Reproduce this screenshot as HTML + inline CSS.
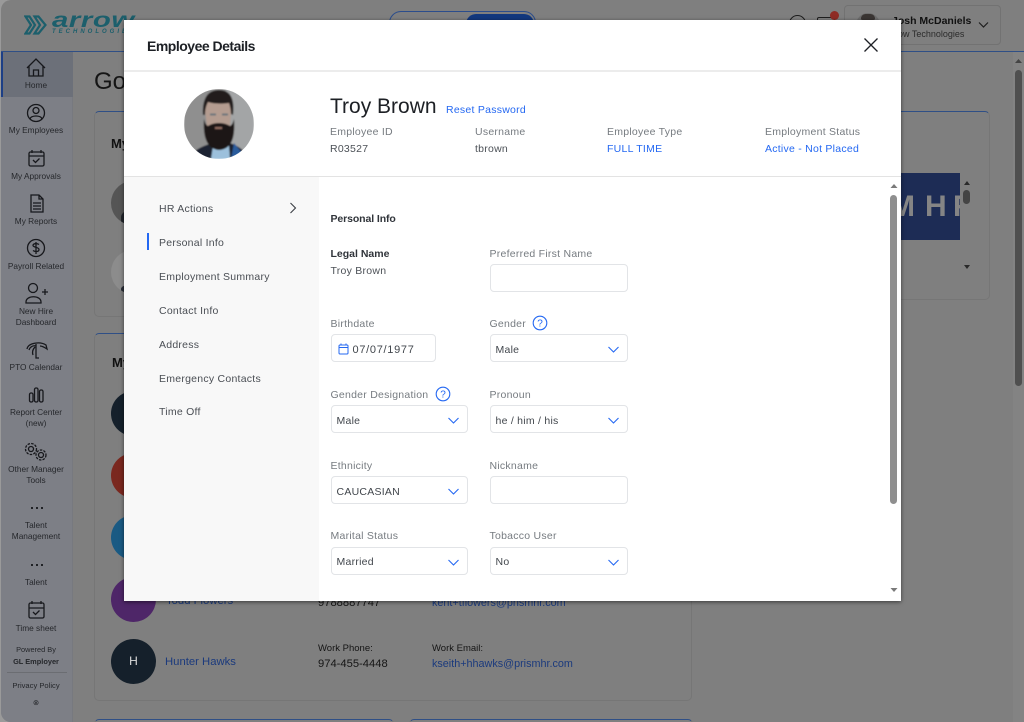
<!DOCTYPE html>
<html><head><meta charset="utf-8"><title>Employee Details</title>
<style>
*{box-sizing:border-box}
html,body{margin:0;padding:0;width:1024px;height:722px;overflow:hidden;background:#9a9a9a;font-family:"Liberation Sans",sans-serif}
.a{position:absolute;white-space:nowrap}
#page{position:absolute;left:1px;top:0;width:1023px;height:722px;background:#7f7f7f;border-radius:10px 0 0 10px;overflow:hidden}
#side{position:absolute;left:0;top:52px;width:72px;height:670px;background:#7d7f86;border-right:1px solid #77797f}
.nl{position:absolute;left:0;width:70px;text-align:center;font-size:8.3px;line-height:11px;color:#25272b}
.card{position:absolute;border:1px solid #767676;border-radius:5px;background:#7f7f7f}
.card.t{border-top:1px solid #2f4f86}
.av{position:absolute;border-radius:50%;overflow:hidden}
.blue{color:#1b3a7d}
#m{position:absolute;left:124px;top:20px;width:777px;height:581px;background:#fff;box-shadow:0 1px 4px rgba(0,0,0,.55);overflow:hidden}
.lb{position:absolute;font-size:10.5px;letter-spacing:.25px;color:#767b80;white-space:nowrap;line-height:13px}
.val{position:absolute;font-size:10.5px;letter-spacing:.25px;color:#4c5157;white-space:nowrap;line-height:13px}
.link{color:#2468f2}
.ni{position:absolute;left:35px;font-size:10.5px;letter-spacing:.25px;color:#4a4e54;white-space:nowrap;line-height:13px}
.in{position:absolute;border:1px solid #e2e4e7;border-radius:4px;background:#fff;height:28px;font-size:10.5px;letter-spacing:.25px;color:#41464c;line-height:30px;padding-left:5px;white-space:nowrap}
.in svg{position:absolute;right:8px;top:11px}
.L{left:206.5px;width:137.5px}
.R{left:365.5px;width:138.5px}
</style></head><body>
<div id="page">
<!-- header -->
<svg class="a" style="left:23px;top:15px" width="24" height="20" viewBox="0 0 24 20" fill="none" stroke="#1c5f6c" stroke-width="2.2"><path d="M1.500 1.500h4l5.500 8.500-5.500 8.500h-4l5.500-8.500z"/><path d="M10.500 1.500h4l7 8.500-7 8.500h-4l5.500-8.500z"/></svg>
<div class="a" style="left:51px;top:9px;font:italic bold 21px/24px 'Liberation Sans',sans-serif;color:#1c5f6c;transform:scaleX(1.4);transform-origin:0 0;letter-spacing:.4px">arrow</div>
<div class="a" style="left:51px;top:28px;font:italic bold 6px/8px 'Liberation Sans',sans-serif;color:#1c5f6c;letter-spacing:3px">TECHNOLOGIES</div>
<div class="a" style="left:388px;top:11px;width:147px;height:24px;border:1px solid #2b4d8c;border-radius:12px"></div>
<div class="a" style="left:465px;top:14px;width:68px;height:20px;background:#12387e;border-radius:10px"></div>
<div class="a" style="left:0;top:51px;width:1023px;height:1px;background:#2f4f86"></div>
<div class="a" style="left:788px;top:15px;width:17px;height:17px;border:1.3px solid #1e1e1e;border-radius:50%"></div>
<div class="a" style="left:816px;top:17px;width:18px;height:16px;border:1.3px solid #1e1e1e;border-radius:2px"></div>
<div class="a" style="left:829px;top:11px;width:9px;height:9px;background:#8e2b25;border-radius:50%"></div>
<div class="a" style="left:843px;top:5px;width:157px;height:40px;border:1px solid #727272;border-radius:4px"></div>
<div class="a" style="left:855px;top:13px;width:24px;height:24px;border-radius:50%;background:#6d6d6d;overflow:hidden"><div class="a" style="left:5px;top:1px;width:14px;height:6px;background:#3a3533;border-radius:6px 6px 2px 2px"></div></div>
<div class="a" style="left:891px;top:14px;font-size:10.5px;font-weight:bold;line-height:14px;color:#111">Josh McDaniels</div>
<div class="a" style="left:885px;top:29px;font-size:9px;line-height:11px;color:#2b2b2b">Arrow Technologies</div>
<svg class="a" style="left:977px;top:21px" width="11" height="8" viewBox="0 0 11 8" fill="none" stroke="#1e1e1e" stroke-width="1.200"><path d="M1 1.500l4.500 4.500L10 1.500"/></svg>
<!-- sidebar -->
<div id="side">
<div class="a" style="left:0;top:0;width:72px;height:45px;background:#6c7079"></div>
<div class="a" style="left:0;top:0;width:2px;height:45px;background:#1d3f86"></div>
<div class="nl" style="top:28px">Home</div>
<div class="nl" style="top:73px">My Employees</div>
<div class="nl" style="top:119px">My Approvals</div>
<div class="nl" style="top:164px">My Reports</div>
<div class="nl" style="top:209px">Payroll Related</div>
<div class="nl" style="top:254px">New Hire<br>Dashboard</div>
<div class="nl" style="top:310px">PTO Calendar</div>
<div class="nl" style="top:355px">Report Center<br>(new)</div>
<div class="nl" style="top:412px">Other Manager<br>Tools</div>
<div class="nl" style="top:468px">Talent<br>Management</div>
<div class="nl" style="top:525px">Talent</div>
<div class="nl" style="top:571px">Time sheet</div>
<div class="nl" style="top:592px;font-size:7.4px">Powered By</div>
<div class="nl" style="top:604px;font-size:7.4px;font-weight:bold">GL Employer</div>
<div class="a" style="left:6px;top:620px;width:60px;height:1px;background:#6b6d72"></div>
<div class="nl" style="top:628px;font-size:7.600px">Privacy Policy</div>
<div class="nl" style="top:645px;font-size:7.600px">&#8855;</div>
</div>
<svg class="a" style="left:0;top:52px" width="72" height="600" viewBox="0 0 72 600" fill="none" stroke="#17181c" stroke-width="1.300">
<path d="M26 16l9-9 9 9M28 14v10h14V14M32.500 24v-6h5v6"/>
<circle cx="35" cy="61" r="8.500"/><circle cx="35" cy="58.500" r="3"/><path d="M29 67c1-4 11-4 12 0"/>
<rect x="28" y="100" width="15" height="14" rx="1.500"/><path d="M28 104h15M31 98v3M40 98v3M32 108l2.500 2.500 4-4"/>
<path d="M30 143h8l4 4v13H30zM38 143v4h4M32 151h8M32 154h8M32 157h8"/>
<circle cx="35" cy="196" r="8.500"/><path d="M38 192.500c-2-1.500-6-1-6 1s6 1.500 6 4-4 2.500-6 1M35 190v12"/>
<circle cx="32" cy="236" r="4.500"/><path d="M25 250c0-7 15-7 15 0v1H25zM41 240h6M44 237v6"/>
<path d="M35 292v14h3M26 297c1-6 13-8 19-4l1 4c-3-2-5-3-7-3M28 298c1-3 4-5 7-4M32 303c-1-3 0-6 2-8"/>
<rect x="28.500" y="341" width="3.500" height="9" rx="1.500"/><rect x="33.500" y="336" width="3.500" height="14" rx="1.500"/><rect x="38.500" y="338" width="3.500" height="12" rx="1.500"/>
<circle cx="30" cy="397" r="2.500"/><circle cx="30" cy="397" r="5.500" stroke-dasharray="2.500 1.200"/><circle cx="40" cy="403" r="2.500"/><circle cx="40" cy="403" r="5" stroke-dasharray="2.500 1.200"/>
<rect x="28" y="551" width="15" height="15" rx="1.500"/><path d="M28 556h15M31 549v3M40 549v3M32 560l2.500 2.500 4-4"/>
</svg>
<div class="a" style="left:30px;top:507px;width:2px;height:2px;background:#202226;box-shadow:5px 0 #202226,10px 0 #202226"></div>
<div class="a" style="left:30px;top:564px;width:2px;height:2px;background:#202226;box-shadow:5px 0 #202226,10px 0 #202226"></div>
<!-- main -->
<div class="a" style="left:93px;top:69px;font-size:24px;line-height:26px;color:#151515">Good</div>
<div class="card t" style="left:93px;top:111px;width:600px;height:206px"></div>
<div class="a" style="left:110px;top:136px;font-size:13px;font-weight:bold;line-height:15px;color:#111">My</div>
<div class="av" style="left:110px;top:181px;width:44px;height:44px;background:#555"><div class="a" style="left:10px;top:28px;width:34px;height:20px;background:#22262c;border-radius:40% 0 0 0"></div></div>
<div class="av" style="left:110px;top:250px;width:44px;height:44px;background:#8c8c8c"><div class="a" style="left:10px;top:34px;width:34px;height:12px;background:#2a2f38;border-radius:40% 0 0 0"></div></div>
<div class="card t" style="left:93px;top:333px;width:598px;height:368px"></div>
<div class="a" style="left:111px;top:355px;font-size:13px;font-weight:bold;line-height:15px;color:#111">My</div>
<div class="av" style="left:110px;top:391px;width:45px;height:45px;background:#15202b"></div>
<div class="av" style="left:110px;top:453px;width:45px;height:45px;background:#7a281f"></div>
<div class="av" style="left:110px;top:515px;width:45px;height:45px;background:#1a5a83"></div>
<div class="av" style="left:110px;top:577px;width:45px;height:45px;background:#4e2668"></div>
<div class="av" style="left:110px;top:639px;width:45px;height:45px;background:#15202b;color:#ddd;font-size:12px;line-height:45px;text-align:center">H</div>
<div class="a blue" style="left:165px;top:595px;font-size:11.3px;line-height:13px">Todd Flowers</div>
<div class="a" style="left:317px;top:597px;font-size:11.2px;line-height:13px;color:#151515">9788887747</div>
<div class="a blue" style="left:431px;top:597px;font-size:10.800px;line-height:13px">kent+tflowers@prismhr.com</div>
<div class="a blue" style="left:164px;top:656px;font-size:11.3px;line-height:13px">Hunter Hawks</div>
<div class="a" style="left:317px;top:643px;font-size:9.500px;line-height:12px;color:#151515">Work Phone:</div>
<div class="a" style="left:317px;top:658px;font-size:11.2px;line-height:13px;color:#151515">974-455-4448</div>
<div class="a" style="left:431px;top:643px;font-size:9.500px;line-height:12px;color:#151515">Work Email:</div>
<div class="a blue" style="left:431px;top:658px;font-size:10.800px;line-height:13px">kseith+hhawks@prismhr.com</div>
<div class="card t" style="left:93px;top:719px;width:300px;height:20px"></div>
<div class="card t" style="left:408px;top:719px;width:284px;height:20px"></div>
<div class="card t" style="left:800px;top:111px;width:189px;height:189px"></div>
<div class="a" style="left:899px;top:173px;width:60px;height:67px;background:#1d2c55;overflow:hidden;color:#858585;font-size:30px;font-weight:bold;line-height:67px">
<span class="a" style="left:-10px;top:0">M</span><span class="a" style="left:25px;top:0">H</span><span class="a" style="left:53px;top:0">R</span></div>
<svg class="a" style="left:961px;top:180px" width="10" height="95" fill="#2a2a2a"><path d="M2 5l3-4 3 4zM2 85l3 4 3-4z"/></svg>
<div class="a" style="left:962px;top:190px;width:7px;height:14px;background:#444;border-radius:4px"></div>
<!-- page scrollbar -->
<div class="a" style="left:1012px;top:52px;width:11px;height:670px;background:#838383"></div>
<div class="a" style="left:1014px;top:70px;width:7px;height:316px;background:#4f4f4f;border-radius:4px"></div>
<svg class="a" style="left:1013px;top:58px" width="9" height="6" fill="#444"><path d="M1 5l3.500-4 3.500 4z"/></svg>
<div class="a" style="left:1005px;top:52px;width:7px;height:670px;background:#7f7f7f"></div>
</div>
<!-- modal -->
<div id="m">
<div class="a" style="left:23px;top:18px;font-size:14px;font-weight:bold;line-height:17px;color:#1d2025;letter-spacing:-.5px">Employee Details</div>
<svg class="a" style="left:739px;top:17px" width="16" height="16" viewBox="0 0 16 16" fill="none" stroke="#1d2025" stroke-width="1.300"><path d="M1.500 1.500l13 13M14.500 1.500l-13 13"/></svg>
<div class="a" style="left:0;top:50px;width:777px;height:2px;background:#ececec"></div>
<svg class="a" style="left:60px;top:69px" width="70" height="70" viewBox="0 0 70 70">
<defs><clipPath id="c"><circle cx="35" cy="35" r="35"/></clipPath><filter id="b"><feGaussianBlur stdDeviation=".7"/></filter></defs>
<g clip-path="url(#c)"><g filter="url(#b)">
<rect width="70" height="70" fill="#8f8f8f"/><rect x="42" width="28" height="70" fill="#a3a5a6"/>
<path d="M6 70c3-10 14-13 22-16h18c8 3 15 7 19 16z" fill="#1c2230"/>
<path d="M50 54l13 16H47z" fill="#2b5c9c"/>
<path d="M27 70l2-13h16l1 13z" fill="#9cc0dc"/>
<path d="M21 22c0-10 6-13 15-13s12 4 11 13l-1 16c-1 6-5 8-11 8s-11-3-12-8z" fill="#b49c90"/>
<path d="M19 26c-1-17 5-25 16-25 11 0 16 8 14 25l-2-1c0-4-1-8-2-11-7 1-15 1-21-1-2 4-3 8-3 13z" fill="#211c1b"/>
<path d="M20 30c1 4 2 6 4 7 3-2 7-3 11-3s8 1 11 3c2-1 3-3 4-7 1 14 0 30-15 31-14-1-16-17-15-31z" fill="#1f1816"/>
<path d="M26 24.500h6v2h-6zM38 24.500h6v2h-6z" fill="#6a747c"/>
<path d="M31 38h7v2h-7z" fill="#8f6a5e"/>
</g></g></svg>
<div class="a" style="left:206px;top:74px;font-size:21px;line-height:25px;color:#1d2025">Troy Brown</div>
<div class="a link" style="left:322px;top:84px;font-size:10.5px;letter-spacing:.25px;line-height:13px">Reset Password</div>
<div class="lb" style="left:206px;top:106px">Employee ID</div>
<div class="val" style="left:206px;top:123px">R03527</div>
<div class="lb" style="left:351px;top:106px">Username</div>
<div class="val" style="left:351px;top:123px">tbrown</div>
<div class="lb" style="left:483px;top:106px">Employee Type</div>
<div class="val link" style="left:483px;top:123px">FULL TIME</div>
<div class="lb" style="left:641px;top:106px">Employment Status</div>
<div class="val link" style="left:641px;top:123px">Active - Not Placed</div>
<div class="a" style="left:0;top:156px;width:777px;height:1px;background:#e3e3e3"></div>
<!-- left nav -->
<div class="a" style="left:0;top:157px;width:195px;height:424px;background:#f8f8f8"></div>
<div class="ni" style="top:183px">HR Actions</div>
<svg class="a" style="left:165px;top:182px" width="8" height="12" viewBox="0 0 8 12" fill="none" stroke="#3a3e44" stroke-width="1.100"><path d="M1.500 1l5 5-5 5"/></svg>
<div class="a" style="left:23px;top:213px;width:2px;height:17px;background:#2468f2"></div>
<div class="ni" style="top:217px">Personal Info</div>
<div class="ni" style="top:251px">Employment Summary</div>
<div class="ni" style="top:285px">Contact Info</div>
<div class="ni" style="top:319px">Address</div>
<div class="ni" style="top:353px">Emergency Contacts</div>
<div class="ni" style="top:386px">Time Off</div>
<!-- form -->
<div class="a" style="left:206.500px;top:193px;font-size:10.500px;font-weight:bold;letter-spacing:-.1px;line-height:13px;color:#30343a">Personal Info</div>
<div class="a" style="left:206.500px;top:228px;font-size:10.500px;font-weight:bold;line-height:13px;color:#30343a">Legal Name</div>
<div class="val" style="left:206.500px;top:245px">Troy Brown</div>
<div class="lb" style="left:365.500px;top:228px">Preferred First Name</div>
<div class="in R" style="top:244px"></div>
<div class="lb" style="left:206.500px;top:298px">Birthdate</div>
<div class="in" style="left:206.500px;top:314px;width:105.500px;padding-left:21px;font-size:11px;letter-spacing:.7px"><svg style="left:6px;top:8px;right:auto" width="11" height="12" viewBox="0 0 11 12" fill="none" stroke="#2468f2" stroke-width="1"><rect x="1" y="2" width="9" height="9" rx="1"/><path d="M1 4.500h9M3 .5v2M8 .5v2"/></svg>07/07/1977</div>
<div class="lb" style="left:365.500px;top:298px">Gender</div>
<svg class="a" style="left:408px;top:295px" width="16" height="16" viewBox="0 0 16 16"><circle cx="8" cy="8" r="6.800" fill="none" stroke="#2468f2" stroke-width="1.100"/><text x="8" y="11.500" text-anchor="middle" font-size="10" fill="#2468f2" font-family="Liberation Sans">?</text></svg>
<div class="in R" style="top:314px">Male<svg width="11" height="7" viewBox="0 0 11 7" fill="none" stroke="#2468f2" stroke-width="1.100"><path d="M.5 1l5 5 5-5"/></svg></div>
<div class="lb" style="left:206.500px;top:369px">Gender Designation</div>
<svg class="a" style="left:311px;top:366px" width="16" height="16" viewBox="0 0 16 16"><circle cx="8" cy="8" r="6.800" fill="none" stroke="#2468f2" stroke-width="1.100"/><text x="8" y="11.500" text-anchor="middle" font-size="10" fill="#2468f2" font-family="Liberation Sans">?</text></svg>
<div class="in L" style="top:385px">Male<svg width="11" height="7" viewBox="0 0 11 7" fill="none" stroke="#2468f2" stroke-width="1.100"><path d="M.5 1l5 5 5-5"/></svg></div>
<div class="lb" style="left:365.500px;top:369px">Pronoun</div>
<div class="in R" style="top:385px">he / him / his<svg width="11" height="7" viewBox="0 0 11 7" fill="none" stroke="#2468f2" stroke-width="1.100"><path d="M.5 1l5 5 5-5"/></svg></div>
<div class="lb" style="left:206.500px;top:440px">Ethnicity</div>
<div class="in L" style="top:456px">CAUCASIAN<svg width="11" height="7" viewBox="0 0 11 7" fill="none" stroke="#2468f2" stroke-width="1.100"><path d="M.5 1l5 5 5-5"/></svg></div>
<div class="lb" style="left:365.500px;top:440px">Nickname</div>
<div class="in R" style="top:456px"></div>
<div class="lb" style="left:206.500px;top:510px">Marital Status</div>
<div class="in L" style="top:527px;line-height:28px">Married<svg width="11" height="7" viewBox="0 0 11 7" fill="none" stroke="#2468f2" stroke-width="1.100"><path d="M.5 1l5 5 5-5"/></svg></div>
<div class="lb" style="left:365.500px;top:510px">Tobacco User</div>
<div class="in R" style="top:527px;line-height:28px">No<svg width="11" height="7" viewBox="0 0 11 7" fill="none" stroke="#2468f2" stroke-width="1.100"><path d="M.5 1l5 5 5-5"/></svg></div>
<!-- modal scrollbar -->
<svg class="a" style="left:766px;top:163px" width="8" height="6" fill="#7a7a7a"><path d="M.5 5l3.500-4 3.500 4z"/></svg>
<div class="a" style="left:766px;top:175px;width:7px;height:309px;background:#8f8f8f;border-radius:4px"></div>
<svg class="a" style="left:766px;top:567px" width="8" height="6" fill="#7a7a7a"><path d="M.5 1l3.500 4 3.500-4z"/></svg>
</div>
</body></html>
